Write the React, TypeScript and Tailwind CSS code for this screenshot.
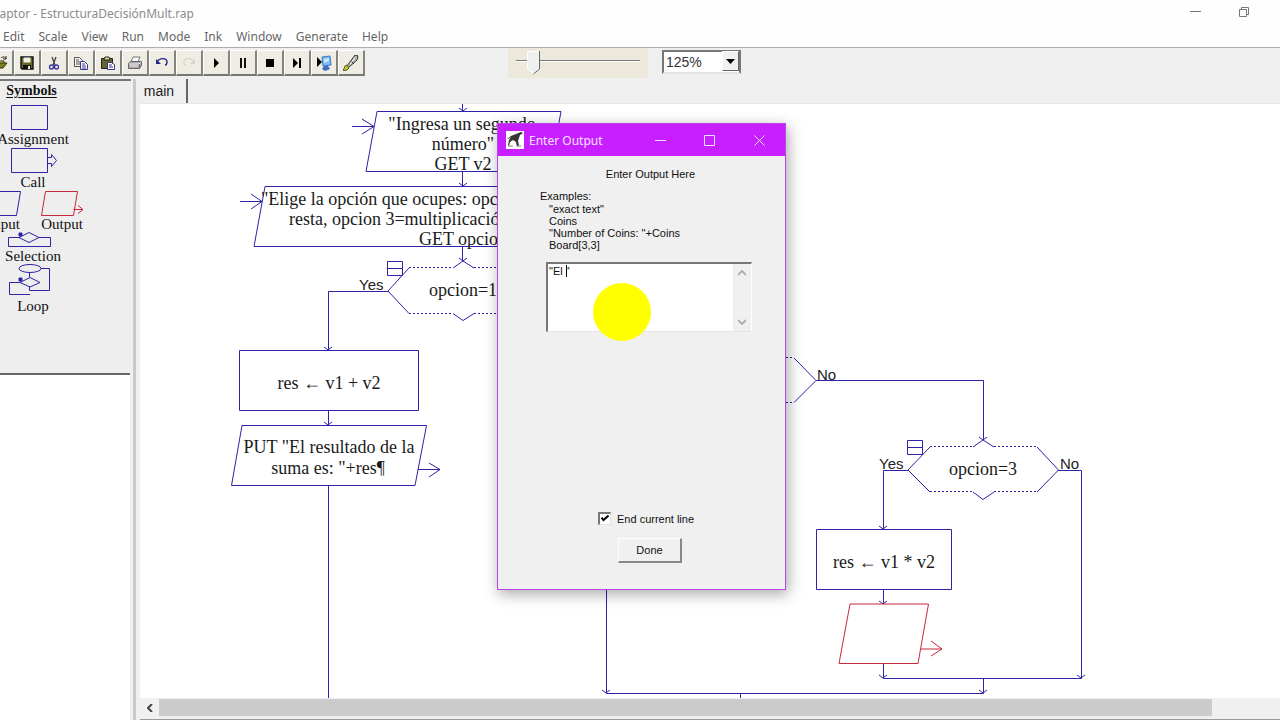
import React, { useState } from 'react';

const MENU_ITEMS = ['Edit', 'Scale', 'View', 'Run', 'Mode', 'Ink', 'Window', 'Generate', 'Help'];

const BLUE = '#2d22a8';
const RED = '#c8283c';

/* ---------- Toolbar ---------- */

const TOOLS: { name: string; icon: React.ReactNode }[] = [
  {
    name: 'Open',
    icon: (
      <>
        <path d="M1 13V4h4l1 2h6v2" fill="#d8d070" stroke="#33330a" />
        <path d="M1 13l3-5h11l-4 5z" fill="#7d7d1c" stroke="#33330a" />
        <path d="M9 3c2-2 4-1 5 1M14 1v3h-3" fill="none" stroke="#222" />
      </>
    ),
  },
  {
    name: 'Save',
    icon: (
      <>
        <path d="M2 2h12v12H3l-1-1z" fill="#66661e" stroke="#111" strokeWidth="1.4" />
        <path d="M4.500 2.500h7v5h-7z" fill="#f1f1e6" />
        <path d="M4 10h8v4H4z" fill="#111" />
        <path d="M9 11h2v3H9z" fill="#eee" />
      </>
    ),
  },
  {
    name: 'Cut',
    icon: (
      <>
        <path d="M6 2l3 8M10 2L7 10" stroke="#444" strokeWidth="1.300" fill="none" />
        <circle cx="5.500" cy="12" r="2" fill="none" stroke="#35359a" strokeWidth="1.300" />
        <circle cx="10.500" cy="12" r="2" fill="none" stroke="#35359a" strokeWidth="1.300" />
      </>
    ),
  },
  {
    name: 'Copy',
    icon: (
      <>
        <path d="M1.500 2.500h5l3 3v6h-8z" fill="#f4f4f4" stroke="#555" />
        <path d="M3 5h3M3 7h4M3 9h4" stroke="#555" />
        <path d="M7.500 6.500h4l3 3v5h-7z" fill="#fff" stroke="#35358c" />
        <path d="M9 9h3M9 11h4M9 13h4" stroke="#35358c" />
      </>
    ),
  },
  {
    name: 'Paste',
    icon: (
      <>
        <path d="M1.500 3.500h11v10h-11z" fill="#66662c" stroke="#222" />
        <path d="M4 4l1-2h4l1 2v1H4z" fill="#ddd39b" stroke="#222" />
        <path d="M7.500 7.500h4l3 2v5h-7z" fill="#fff" stroke="#35358c" />
        <path d="M9 10h3M9 12h4" stroke="#35358c" />
      </>
    ),
  },
  {
    name: 'Print',
    icon: (
      <>
        <path d="M4 7l2-5h7l-2 5" fill="#f8f8f8" stroke="#777" />
        <path d="M1.500 8.500l2-2h11v4l-2 3h-11z" fill="#aaa" stroke="#666" />
        <path d="M2 9h10l2-2M3 11h8" stroke="#eee" fill="none" />
        <path d="M12.500 9v4" stroke="#666" />
      </>
    ),
  },
  {
    name: 'Undo',
    icon: (
      <>
        <path d="M3 7c3-5 10-4 10 0 0 2-1 3-2 3" fill="none" stroke="#25258a" strokeWidth="1.400" />
        <path d="M2 4v5h5z" fill="#25258a" />
      </>
    ),
  },
  {
    name: 'Redo',
    icon: (
      <>
        <path d="M13 7c-3-5-10-4-10 0 0 2 1 3 2 3" fill="none" stroke="#d9d6c8" strokeWidth="1.300" />
        <path d="M14 4v5H9z" fill="#d9d6c8" />
      </>
    ),
  },
  { name: 'Play', icon: <path d="M6 3l5 5-5 5z" fill="#000" /> },
  { name: 'Pause', icon: <path d="M5 3h2v10H5zM9 3h2v10H9z" fill="#111" /> },
  { name: 'Stop', icon: <path d="M4 4h8v8H4z" fill="#000" /> },
  { name: 'Step', icon: <path d="M4 3l5 5-5 5zM10 3h2v10h-2z" fill="#000" /> },
  {
    name: 'Run compiled',
    icon: (
      <>
        <path d="M6 2l8-1 1 9-8 1z" fill="#79bff0" stroke="#3c76c4" />
        <path d="M8 4l5-1v3l-5 2z" fill="#c7e7fb" />
        <path d="M8 11h4l2 3-5 2-3-2z" fill="#3d6fc0" />
        <path d="M1 2l5 5-5 5z" fill="#000" />
      </>
    ),
  },
  {
    name: 'Pen',
    icon: (
      <>
        <path d="M4 11L12 0l3 1-1 4-9 8z" fill="#b8b8b0" stroke="#333" />
        <path d="M8 6l3 3" stroke="#333" />
        <path d="M0 16l2-5 2-1 2 3-2 2z" fill="#c5c83a" stroke="#55551c" />
        <path d="M7 9l5-6" stroke="#fff" />
      </>
    ),
  },
];

const ToolButton: React.FC<{ name: string; icon: React.ReactNode }> = ({ name, icon }) => (
  <button
    type="button"
    aria-label={name}
    className="flex h-[26px] w-[27px] shrink-0 items-center justify-center border-r-2 border-b-2 border-t border-l border-t-white border-l-white border-r-[#85857f] border-b-[#77776f] bg-[#efede3]"
  >
    <svg width="16" height="16" viewBox="0 0 16 16">{icon}</svg>
  </button>
);

const Toolbar: React.FC = () => {
  const [speed, setSpeed] = useState(12);

  return (
    <div className="flex h-8 shrink-0 items-start border-t border-[#adadad] bg-[#efefef]">
      <div className="-ml-[13px] flex w-[521px] shrink-0 pt-[2px]">
        {TOOLS.map(tool => (
          <ToolButton key={tool.name} name={tool.name} icon={tool.icon} />
        ))}
      </div>
      <div className="relative h-[30px] w-[140px] shrink-0 bg-[#ece8dc]">
        <svg className="absolute inset-0" width="140" height="30" viewBox="0 0 140 30">
          <path d="M8 12.500h124" stroke="#777" />
          <path d="M8 13.500h124" stroke="#fff" />
          <path d="M19.500 3.500h12v18l-5 5-7-5z" fill="#f0f0ee" />
          <path d="M26 26l-6.500-5V3.500h12" fill="none" stroke="#fff" />
          <path d="M31.500 3v18l-6 5" fill="none" stroke="#666" />
        </svg>
        <input
          type="range"
          aria-label="Speed"
          value={speed}
          onChange={e => setSpeed(Number(e.target.value))}
          className="absolute inset-0 h-full w-full opacity-0"
        />
      </div>
      <div className="relative ml-[14px] mt-px h-6 w-[79px] shrink-0">
        <select
          aria-label="Zoom"
          defaultValue="125%"
          className="h-full w-full appearance-none border-2 border-t-[#777] border-l-[#777] border-r-[#777] border-b-[#e4e4e4] bg-white pl-[2px] font-['Liberation_Sans',sans-serif] text-sm text-[#333]"
        >
          <option>100%</option>
          <option>125%</option>
          <option>150%</option>
        </select>
        <span className="pointer-events-none absolute top-[2px] right-[2px] flex h-5 w-[17px] items-center justify-center border border-t-white border-l-white border-r-[#666] border-b-[#666] bg-[#f0f0f0]">
          <svg width="9" height="5" viewBox="0 0 9 5"><path d="M0 0h9L4.500 5z" fill="#000" /></svg>
        </span>
      </div>
    </div>
  );
};

/* ---------- Symbols panel ---------- */

const SymbolLabel: React.FC<{ children: React.ReactNode }> = ({ children }) => (
  <span className="text-[15px] leading-4 whitespace-nowrap">{children}</span>
);

const SymbolsPanel: React.FC = () => (
  <aside className="flex w-[131px] shrink-0 flex-col bg-[#eeeeee]">
    <div className="flex h-[294px] shrink-0 flex-col overflow-hidden border-t-2 border-[#777] pt-px font-['Liberation_Serif',serif] text-[#111]">
      <div className="flex w-[66px] flex-col items-center">
        <h2 className="mt-px mr-[3px] text-sm leading-4 font-bold underline underline-offset-2">Symbols</h2>
        <svg className="mt-[6px]" width="66" height="26" fill="none" stroke={BLUE}>
          <path d="M11.500 .5h36v24h-36z" />
        </svg>
        <SymbolLabel>Assignment</SymbolLabel>
        <svg className="mt-px" width="66" height="26" fill="none" stroke={BLUE}>
          <path d="M11.500 .5h36v24h-36zM47.500 9.500h4v-3l5 6-5 6v-3h-4" />
        </svg>
        <SymbolLabel>Call</SymbolLabel>
      </div>
      <div className="-ml-[22px] mt-px flex">
        <button type="button" className="flex w-[52px] flex-col items-center">
          <svg width="52" height="25" fill="none" stroke={BLUE}>
            <path d="M10.500 .5h32l-4 24h-32z" />
          </svg>
          <SymbolLabel>Input</SymbolLabel>
        </button>
        <button type="button" className="ml-[6px] flex w-[52px] flex-col items-center">
          <svg width="52" height="25" fill="none" stroke={RED}>
            <path d="M9.500 .5h32l-4 24h-32zM37.500 18.500h9M42 14.500l5 4-5 4" />
          </svg>
          <SymbolLabel>Output</SymbolLabel>
        </button>
      </div>
      <div className="flex w-[66px] flex-col items-center">
        <svg width="66" height="16" fill="none" stroke={BLUE}>
          <path d="M20 5.500H8.500v9h42v-9H39M19 5.500l10-5 10 5-10 5z" />
          <path d="M19 1h3v3h-3z" fill={BLUE} />
        </svg>
        <SymbolLabel>Selection</SymbolLabel>
        <svg width="66" height="34" fill="none" stroke={BLUE}>
          <ellipse cx="30" cy="4.500" rx="11" ry="4" />
          <path d="M41 4.500h8.500v22H29.500v-4M29.500 9v4M20 18.500l10-5 10 5-10 4.500zM20 18.500H9.500v12H30" />
          <path d="M19 14h3v3h-3z" fill={BLUE} />
        </svg>
        <SymbolLabel>Loop</SymbolLabel>
      </div>
    </div>
    <div className="mr-px flex-1 border-t-2 border-[#666] bg-white" />
  </aside>
);

/* ---------- Flowchart ---------- */

// arrow tip pointing down at (x, y)
const Tip: React.FC<{ x: number; y: number }> = ({ x, y }) => (
  <path d={`M${x - 4} ${y - 3}L${x} ${y}L${x + 4} ${y - 3}`} />
);

const Flowchart: React.FC = () => (
  <svg className="absolute top-0 left-0" width="1140" height="594" viewBox="140 104 1140 594">
    <g fill="none" stroke={BLUE}>
      <path d="M462.500 104V112M377 111.500H561L550 171.500H366zM352 126.500H374M362 119L374 126.500L362 134" />
      <path d="M462.500 171.500V186.500M265 186.500H672L661 246.500H254zM240 201.500H262M251 194L262 201.500L251 209" />
      <path d="M462.500 246V261M453 268L463 261L474 268M453 313.500L463 320.500L474 313.500" />
      <path d="M409 268L388 291L409 313.500" />
      <path d="M409 267.500H453M474 267.500H517M409 313.500H453M474 313.500H517" strokeDasharray="2 2" />
      <path d="M387.500 261.500h15v14h-15zM387.500 268.500h15" />
      <path d="M388 291.500H328.500V350.500M239.500 350.500H418.500V410.500H239.500zM328.500 410.500V425.500" />
      <path d="M242 425.500H426.500L415 485.500H231.500zM418 469.500H440M429 463L440 469.500L429 477M328.500 485.500V698" />

      <path d="M794 358L816 380.500L794 402.500" />
      <path d="M770 357.500H794M770 402.500H794" strokeDasharray="2 2" />
      <path d="M816 380.500H983.500V440" />
      <path d="M930 447L908 470L930 492M1037 447L1058.500 470L1037 492M973 447L983 440L994 447M973 492L983 499.500L994 492" />
      <path d="M930 446.500H973M994 446.500H1037M930 491.500H973M994 491.500H1037" strokeDasharray="2 2" />
      <path d="M907.500 440.500h15v14h-15zM907.500 447.500h15" />
      <path d="M908 470.500H883.500V529.500M816.500 529.500H951.500V589.500H816.500zM883.500 589.500V604" />
      <path d="M883.500 663.500V678.500H1081.500V470.500H1058M983.500 678.500V693.500H606.500V588M740.500 693.500V698" />
      <Tip x={463} y={111} />
      <Tip x={463} y={186} />
      <Tip x={463} y={261} />
      <Tip x={328} y={350} />
      <Tip x={328} y={425} />
      <Tip x={983} y={440} />
      <Tip x={883} y={529} />
      <Tip x={883} y={604} />
      <Tip x={883} y={678} />
      <Tip x={1081} y={678} />
      <Tip x={983} y={693} />
      <Tip x={606} y={693} />
    </g>
    <path
      d="M850 604H928.500L918 663.500H839zM921 649H942M931 641L942 649L931 656"
      fill="none"
      stroke={RED}
    />
    <g className="font-['Liberation_Serif',serif] text-lg" fill="#1a1a1a" textAnchor="middle">
      <text x="462" y="130">"Ingresa un segundo</text>
      <text x="463" y="150">número"</text>
      <text x="463" y="170">GET v2</text>
      <text x="261" y="205" textAnchor="start">"Elige la opción que ocupes: opcion</text>
      <text x="289" y="225" textAnchor="start">resta, opcion 3=multiplicación</text>
      <text x="463" y="245">GET opcion</text>
      <text x="463" y="296">opcion=1</text>
      <text x="329" y="389">res ← v1 + v2</text>
      <text x="329" y="453">PUT "El resultado de la</text>
      <text x="328" y="474">suma es: "+res¶</text>
      <text x="983" y="475">opcion=3</text>
      <text x="884" y="568">res ← v1 * v2</text>
    </g>
    <g className="font-['Liberation_Sans',sans-serif] text-[15px]" fill="#222">
      <text x="359" y="290">Yes</text>
      <text x="817" y="380">No</text>
      <text x="879" y="469">Yes</text>
      <text x="1060" y="469">No</text>
    </g>
  </svg>
);

/* ---------- Enter Output dialog ---------- */

const OutputDialog: React.FC = () => {
  const [text, setText] = useState('"El "');
  const [endLine, setEndLine] = useState(true);

  return (
    <div
      role="dialog"
      aria-label="Enter Output"
      className="absolute top-[123px] left-[497px] flex h-[467px] w-[289px] flex-col border border-[#b845e6] bg-[#f0f0f0] font-['Liberation_Sans',sans-serif] text-[11px] leading-3 text-[#111] shadow-[2px_4px_14px_rgba(0,0,0,0.35)]"
    >
      <div className="flex h-8 shrink-0 items-center bg-[#c71fff] pl-2 text-white">
        <svg width="18" height="18" viewBox="0 0 18 18">
          <path d="M0 0h18v18H0z" fill="#fff" />
          <path d="M1 8l4-3 5-2 5-2 2 1-3 2-1 3-1 3 1 4-2 2-1-5-3-2-3 2-1 4-1-1 1-5 2-3-3 2z" fill="#3a3434" />
          <path d="M2 15h5M11 15h4" stroke="#8a8080" />
        </svg>
        <span className="ml-[5px] pt-[2px] font-['Noto_Sans',sans-serif] text-xs leading-4 text-[#f7e2ff]">Enter Output</span>
        <div className="ml-auto flex">
          <button type="button" aria-label="Minimize" className="flex h-8 w-[49px] items-center justify-center">
            <svg width="11" height="11" stroke="#f7e2ff"><path d="M0 5.500h11" /></svg>
          </button>
          <button type="button" aria-label="Maximize" className="flex h-8 w-[49px] items-center justify-center">
            <svg width="11" height="11" stroke="#f7e2ff" fill="none"><path d="M.5.5h10v10H.5z" /></svg>
          </button>
          <button type="button" aria-label="Close" className="flex h-8 w-[51px] items-center justify-center">
            <svg width="11" height="11" stroke="#f7e2ff"><path d="M.5.5l10 10M10.500.5l-10 10" /></svg>
          </button>
        </div>
      </div>

      <div className="flex flex-1 flex-col">
        <label htmlFor="output" className="mt-3 ml-[18px] text-center">Enter Output Here</label>
        <div className="mt-[10px] ml-[42px]">
          <p>Examples:</p>
          <div className="mt-px pl-[9px]">
            <p>"exact text"</p>
            <p>Coins</p>
            <p>"Number of Coins: "+Coins</p>
            <p>Board[3,3]</p>
          </div>
        </div>

        <div className="relative mt-[11px] ml-12 flex h-[70px] w-[206px] border-t-2 border-l-2 border-r border-b border-t-[#777] border-l-[#777] border-r-white border-b-[#e3e3e3] bg-white">
          <textarea
            id="output"
            value={text}
            onChange={e => setText(e.target.value)}
            className="h-full flex-1 resize-none overflow-hidden bg-transparent pt-px pl-px leading-3 outline-none"
          />
          {/* caret */}
          <span className="absolute top-px left-[18px] h-3 w-px bg-black" />
          <div className="flex w-[18px] flex-col items-center justify-between bg-[#f0f0f0] py-[6px]">
            <svg width="8" height="6" fill="none" stroke="#b0b0b0" strokeWidth="2"><path d="M0 5l4-4 4 4" /></svg>
            <svg width="8" height="6" fill="none" stroke="#b0b0b0" strokeWidth="2"><path d="M0 1l4 4 4-4" /></svg>
          </div>
          {/* pointer highlight */}
          <span className="pointer-events-none absolute top-[19px] left-[45px] h-[58px] w-[58px] rounded-full bg-[#ffff00]" />
        </div>

        <div className="mt-auto ml-[100px] flex items-center">
          <span className="relative flex">
            <input
              id="end-line"
              type="checkbox"
              checked={endLine}
              onChange={e => setEndLine(e.target.checked)}
              className="h-[13px] w-[13px] appearance-none border-t-2 border-l-2 border-r border-b border-t-[#777] border-l-[#777] border-r-[#e3e3e3] border-b-[#e3e3e3] bg-white"
            />
            {endLine && (
              <svg className="pointer-events-none absolute top-[3px] left-[3px]" width="8" height="7" fill="none" stroke="#000" strokeWidth="2">
                <path d="M.5 2.500l2 2.500 5-4.500" />
              </svg>
            )}
          </span>
          <label htmlFor="end-line" className="ml-[6px]">End current line</label>
        </div>
        <button
          type="button"
          className="mt-[13px] mb-[26px] ml-[120px] h-[25px] w-16 border-t border-l border-r-2 border-b-2 border-t-white border-l-white border-r-[#888] border-b-[#888] bg-[#f0f0f0]"
        >
          Done
        </button>
      </div>
    </div>
  );
};

/* ---------- Main window ---------- */

const App: React.FC = () => (
  <div className="relative flex h-screen flex-col overflow-hidden bg-[#fefefe]">
    <header className="flex h-[27px] shrink-0 items-center justify-between font-['Noto_Sans',sans-serif] text-xs text-[#8c8c8c]">
      <h1 className="-ml-2 whitespace-nowrap">Raptor - EstructuraDecisiónMult.rap</h1>
      <div className="flex gap-[37px] pr-[30px] pb-1">
        <button type="button" aria-label="Minimize">
          <svg width="12" height="12" stroke="#777"><path d="M1 5.500h11" /></svg>
        </button>
        <button type="button" aria-label="Restore">
          <svg width="12" height="12" stroke="#777" fill="none">
            <path d="M1.500 3.500h7v7h-7zM3.500 3V1.500h7v7H9" />
          </svg>
        </button>
      </div>
    </header>

    <nav className="flex h-5 shrink-0 items-center gap-[14px] pl-[3px] font-['Noto_Sans',sans-serif] text-xs text-[#666]">
      {MENU_ITEMS.map(item => (
        <button key={item} type="button">{item}</button>
      ))}
    </nav>

    <Toolbar />

    <div className="flex min-h-0 flex-1">
      <SymbolsPanel />
      <div className="w-[9px] shrink-0 bg-[#efefef] pl-[2px]">
        <div className="h-full w-[3px] bg-[#c9c9c9]" />
      </div>
      <main className="flex min-w-0 flex-1 flex-col">
        <div className="flex h-[25px] shrink-0 border-b border-[#e6e6e6] bg-[#efefef]">
          <button
            type="button"
            className="w-12 border-r-2 border-[#666] pr-2 font-['Liberation_Sans',sans-serif] text-sm text-[#222]"
          >
            main
          </button>
        </div>
        <div className="relative min-h-0 flex-1 overflow-hidden bg-white">
          <Flowchart />
        </div>
        <div className="flex h-[22px] shrink-0 border-b border-[#999] bg-[#f0f0f0] pt-px pb-[3px]">
          <button type="button" aria-label="Scroll left" className="flex w-[19px] items-center justify-center">
            <svg width="6" height="8" fill="none" stroke="#444" strokeWidth="2"><path d="M5 0L1 4l4 4" /></svg>
          </button>
          <div className="mr-[68px] flex-1 bg-[#cbcbcb]" />
        </div>
      </main>
    </div>

    <OutputDialog />
  </div>
);

export default App;
